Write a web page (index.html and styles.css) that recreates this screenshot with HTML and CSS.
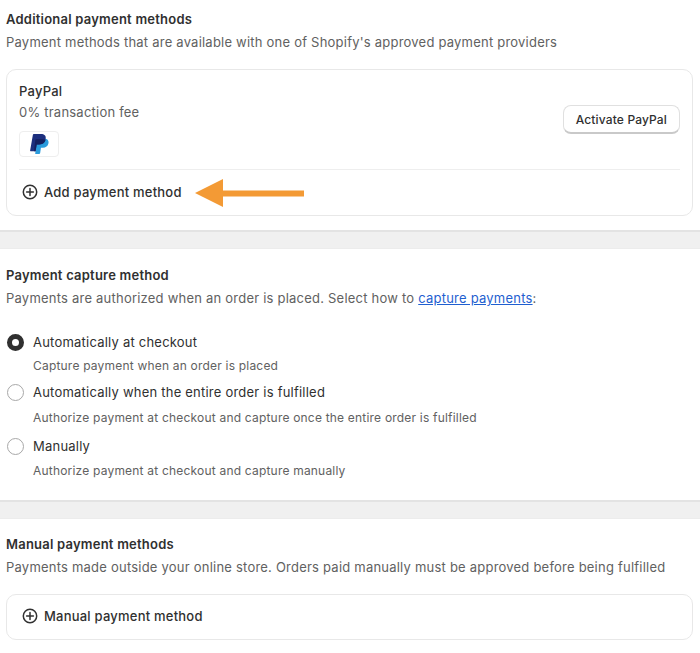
FILE: index.html
```html
<!DOCTYPE html>
<html lang="en">
<head>
    <meta charset="UTF-8">
    <meta name="viewport" content="width=device-width, initial-scale=1.0">
    <title>Payments</title>
    <link rel="stylesheet" href="styles.css">
</head>
<body>
    <section class="section section-additional">
        <h2>Additional payment methods</h2>
        <p class="desc">Payment methods that are available with one of Shopify's approved payment providers</p>
        <div class="card">
            <div class="provider">
                <div class="provider-info">
                    <div class="provider-name">PayPal</div>
                    <div class="provider-fee">0% transaction fee</div>
                    <div class="logo-box">
                        <svg width="19" height="20" viewBox="0 0 20 21">
                            <path fill="#2a9bdc" d="M7 5h8c3 0 5 1.500 4.500 4.500-.6 3.500-3 5-6 5h-2l-.8 5.500c-.1.500-.4 1-1 1H5.500z"/>
                            <path fill="#1d2f7e" d="M4 0h7.500c3.500 0 5.500 1.500 5 5-.6 4-3.500 6-7 6H7l-1.100 7H.5c-.3 0-.5-.2-.4-.5L3 1c.1-.6.500-1 1-1z"/>
                            <path fill="#14205f" d="M6.500 5.500h6.500c1.300 0 2.500.2 3.400.7-.9 3.200-3.500 4.800-7 4.800H7l-1.100 7H4.200L5.600 6.400c.1-.5.400-.9.900-.9z"/>
                        </svg>
                    </div>
                </div>
                <button class="btn">Activate PayPal</button>
            </div>
            <div class="add-row add-row-divided">
                <svg class="plus" width="16" height="16" viewBox="0 0 16 16">
                    <circle cx="8" cy="8" r="6.700" fill="none" stroke="#303030" stroke-width="1.500"/>
                    <path d="M8 4.600v6.800M4.600 8h6.800" stroke="#303030" stroke-width="1.500" stroke-linecap="round"/>
                </svg>
                <span>Add payment method</span>
                <svg class="arrow" width="110" height="28" viewBox="0 0 110 28">
                    <path fill="#f39a35" d="M0 14 28 0v11.500h81v6H28V28z"/>
                </svg>
            </div>
        </div>
    </section>

    <section class="section section-capture">
        <h2>Payment capture method</h2>
        <p class="desc">Payments are authorized when an order is placed. Select how to <a href="#">capture payments</a>:</p>
        <div class="options">
            <div class="option option-first">
                <div class="option-line"><span class="radio radio-on"></span><span>Automatically at checkout</span></div>
                <div class="option-help">Capture payment when an order is placed</div>
            </div>
            <div class="option option-second">
                <div class="option-line"><span class="radio"></span><span>Automatically when the entire order is fulfilled</span></div>
                <div class="option-help">Authorize payment at checkout and capture once the entire order is fulfilled</div>
            </div>
            <div class="option">
                <div class="option-line"><span class="radio"></span><span>Manually</span></div>
                <div class="option-help">Authorize payment at checkout and capture manually</div>
            </div>
        </div>
    </section>

    <section class="section section-manual">
        <h2>Manual payment methods</h2>
        <p class="desc">Payments made outside your online store. Orders paid manually must be approved before being fulfilled</p>
        <div class="card card-manual">
            <div class="add-row">
                <svg class="plus" width="16" height="16" viewBox="0 0 16 16">
                    <circle cx="8" cy="8" r="6.700" fill="none" stroke="#303030" stroke-width="1.500"/>
                    <path d="M8 4.600v6.800M4.600 8h6.800" stroke="#303030" stroke-width="1.500" stroke-linecap="round"/>
                </svg>
                <span>Manual payment method</span>
            </div>
        </div>
    </section>
</body>
</html>
```

FILE: styles.css
```css
html, body {
    margin: 0;
    padding: 0;
}
body {
    width: 700px;
    height: 653px;
    overflow: hidden;
    background: #f0f0f0;
    font-family: 'Inter', Arial, sans-serif;
    font-size: 13px;
    line-height: 20px;
    color: #303030;
    letter-spacing: 0.22px;
}
.section {
    background: white;
    padding: 0 7px 0 6px;
    box-sizing: border-box;
}
.section-additional {
    height: 232px;
    padding-top: 9px;
    border-bottom: 2px solid #e3e3e3;
}
.section-capture {
    height: 254px;
    margin-top: 16px;
    padding-top: 16px;
    border-top: 1px solid #ececec;
    border-bottom: 2px solid #e3e3e3;
}
.section-manual {
    height: 136px;
    margin-top: 16px;
    padding-top: 15px;
    border-top: 1px solid #ececec;
}
h2 {
    margin: 0;
    font-size: 13px;
    font-weight: 600;
    line-height: 20px;
}
.desc {
    margin: 3px 0 0;
    color: #616161;
}
.desc a {
    color: #1f5fd0;
}
.card {
    margin-top: 17px;
    border: 1px solid #e8e8e8;
    border-radius: 10px;
    padding: 11px 12px 0;
}
.card-manual {
    margin-top: 17px;
    padding-top: 0;
}
.provider {
    display: flex;
    justify-content: space-between;
    align-items: center;
    padding-bottom: 12px;
    border-bottom: 1px solid #eeeeee;
}
.provider-name {
    font-weight: 500;
}
.provider-fee {
    color: #616161;
    margin-top: 1px;
}
.logo-box {
    display: flex;
    justify-content: center;
    align-items: center;
    width: 38px;
    height: 24px;
    margin-top: 9px;
    border: 1px solid #eeeeee;
    border-radius: 4px;
}
.btn {
    height: 29px;
    padding: 2px 12px 0;
    border: 1px solid #e0e0e0;
    border-bottom: 2px solid #c9c9c9;
    border-radius: 8px;
    background: white;
    font-family: inherit;
    font-size: 12px;
    font-weight: 500;
    letter-spacing: 0.15px;
    color: #303030;
}
.add-row {
    display: flex;
    align-items: center;
    gap: 6px;
    height: 44px;
    box-sizing: border-box;
    padding: 0 0 2px 3px;
    font-weight: 500;
    position: relative;
}
.add-row-divided {
    height: 45px;
}
.arrow {
    position: absolute;
    left: 176px;
    top: 9px;
}
.options {
    margin-top: 24px;
}
.option {
    margin-top: 8px;
}
.option-first {
    margin-top: 0;
}
.option-second {
    margin-top: 6px;
}
.option-line {
    display: flex;
    align-items: center;
    gap: 9px;
    padding-left: 1px;
}
.radio {
    width: 15px;
    height: 15px;
    border: 1px solid #a8a8a8;
    border-radius: 50%;
    flex: none;
}
.radio-on {
    width: 7px;
    height: 7px;
    border: 5px solid #303030;
}
.option-help {
    margin: 5px 0 0 27px;
    font-size: 12px;
    letter-spacing: 0.2px;
    color: #616161;
}
.option-first .option-help {
    margin-top: 4px;
}
.option-second .option-help {
    margin-top: 6px;
}
```
